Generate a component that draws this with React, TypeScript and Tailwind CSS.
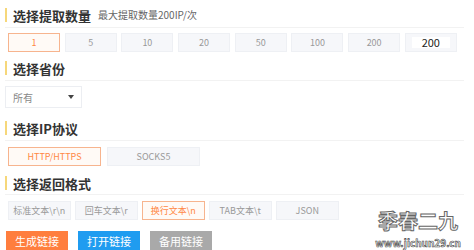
import { useState } from 'react'

const counts = ['1', '5', '10', '20', '50', '100', '200']
const formats = ['标准文本\\r\\n', '回车文本\\r', '换行文本\\n', 'TAB文本\\t', 'JSON']

function Title({ text, sub }: { text: string; sub?: string }) {
  return (
    <div className="flex items-center h-[14px] pb-0">
      <span className="w-[2px] h-[14px] bg-[#f6d77a] mr-[6px]" />
      <span className="text-[13px] font-bold text-[#333] leading-none">{text}</span>
      {sub && <span className="ml-[7px] text-[10px] text-[#666] leading-none">{sub}</span>}
    </div>
  )
}

function Opt({ label, active, w, onClick }: { label: string; active: boolean; w: string; onClick: () => void }) {
  return (
    <button
      onClick={onClick}
      className={`${w} h-[19px] flex items-center justify-center text-[9px] leading-none border whitespace-nowrap ${
        active ? 'border-[#f7b48e] bg-[#fffaf6] text-[#ff8845]' : 'border-[#eef0f4] bg-[#f6f7fa] text-[#999]'
      }`}
    >
      {label}
    </button>
  )
}

export default function App() {
  const [count, setCount] = useState('1')
  const [proto, setProto] = useState('HTTP/HTTPS')
  const [fmt, setFmt] = useState('换行文本\\n')

  return (
    <div className="relative w-[474px] h-[250px] overflow-hidden bg-white pl-[5px] pt-[8px] font-['Noto_Sans_CJK_SC',sans-serif]">
      <Title text="选择提取数量" sub="最大提取数量200IP/次" />
      <div className="mt-[5px] mr-[10px] border-t border-[#f2f2f2]" />
      <div className="mt-[5px] ml-[3px] flex gap-[4.7px]">
        {counts.map(c => (
          <Opt key={c} label={c} w="w-[52px]" active={count === c} onClick={() => setCount(c)} />
        ))}
        <div className="w-[52px] h-[19px] border border-[#eef0f4] bg-[#f6f7fa] flex items-center justify-center">
          <input
            defaultValue="200"
            className="w-[38px] h-[11px] bg-white text-center text-[11px] text-[#222] outline-none"
          />
        </div>
      </div>

      <div className="mt-[9px]">
        <Title text="选择省份" />
      </div>
      <div className="mt-[5px] mr-[10px] border-t border-[#f2f2f2]" />
      <div className="mt-[5px] w-[77px] h-[22px] border border-[#eceef2] flex items-center justify-between pl-[7px] pr-[7px]">
        <span className="text-[10px] text-[#888]">所有</span>
        <span className="w-0 h-0 border-l-[3px] border-r-[3px] border-t-[4px] border-l-transparent border-r-transparent border-t-[#444]" />
      </div>

      <div className="mt-[13px]">
        <Title text="选择IP协议" />
      </div>
      <div className="mt-[5px] mr-[10px] border-t border-[#f2f2f2]" />
      <div className="mt-[6px] ml-[3px] flex gap-[6px]">
        {['HTTP/HTTPS', 'SOCKS5'].map(p => (
          <Opt key={p} label={p} w="w-[93px]" active={proto === p} onClick={() => setProto(p)} />
        ))}
      </div>

      <div className="mt-[10px]">
        <Title text="选择返回格式" />
      </div>
      <div className="mt-[4px] mr-[10px] border-t border-[#f2f2f2]" />
      <div className="mt-[6px] ml-[3px] flex gap-[4.5px]">
        {formats.map(f => (
          <Opt key={f} label={f} w="w-[62.5px]" active={fmt === f} onClick={() => setFmt(f)} />
        ))}
      </div>

      <div className="mt-[11px] ml-[1px] flex gap-[10px]">
        <button className="w-[62px] h-[20px] bg-[#ff7e3e] text-white text-[11px]">生成链接</button>
        <button className="w-[62px] h-[20px] bg-[#1f9cf0] text-white text-[11px]">打开链接</button>
        <button className="w-[62px] h-[20px] bg-[#a9a9a9] text-white text-[11px]">备用链接</button>
      </div>

      <div className="absolute right-[13px] bottom-[2px] flex flex-col items-center">
        <span className="text-[20px] leading-[20px] font-bold text-white [-webkit-text-stroke:1px_#666]">季春二九</span>
        <span className="mt-[7px] text-[10px] leading-[10px] font-bold text-white [-webkit-text-stroke:0.6px_#444]">www.jichun29.cn</span>
      </div>
    </div>
  )
}
